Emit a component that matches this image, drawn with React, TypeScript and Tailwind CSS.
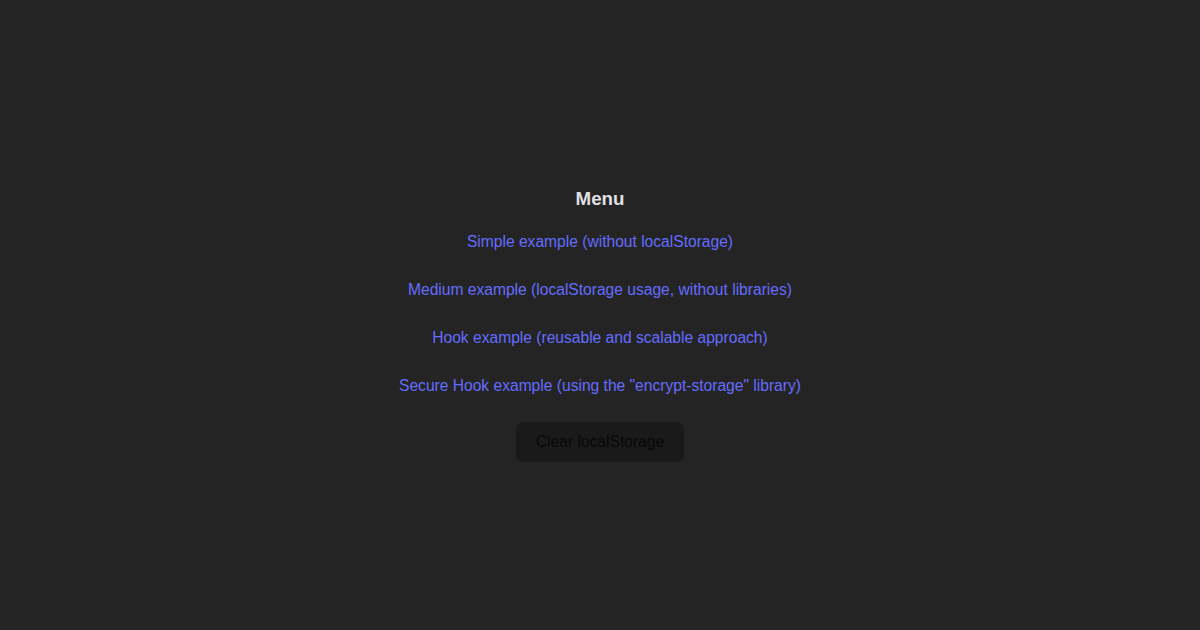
const links = [
  'Simple example (without localStorage)',
  'Medium example (localStorage usage, without libraries)',
  'Hook example (reusable and scalable approach)',
  'Secure Hook example (using the "encrypt-storage" library)',
];

export default function App() {
  return (
    <div className="w-full h-[630px] bg-[#242424] font-['Liberation_Sans',Arial,sans-serif] flex flex-col items-center pt-[185px]">
      <h3 className="text-[18.72px] leading-[28px] font-bold text-[#e0e0e6]">Menu</h3>
      <nav className="mt-[17px] flex flex-col items-center gap-[24px]">
        {links.map((label) => (
          <a
            key={label}
            href="#"
            className="text-[15.6px] leading-[24px] text-[#646cff] hover:text-[#535bf2]"
          >
            {label}
          </a>
        ))}
      </nav>
      <button className="mt-[24px] h-[40px] w-[168px] rounded-[8px] bg-[#1a1a1a] text-[15.6px] text-[#080808] border border-transparent">
        Clear localStorage
      </button>
    </div>
  );
}
